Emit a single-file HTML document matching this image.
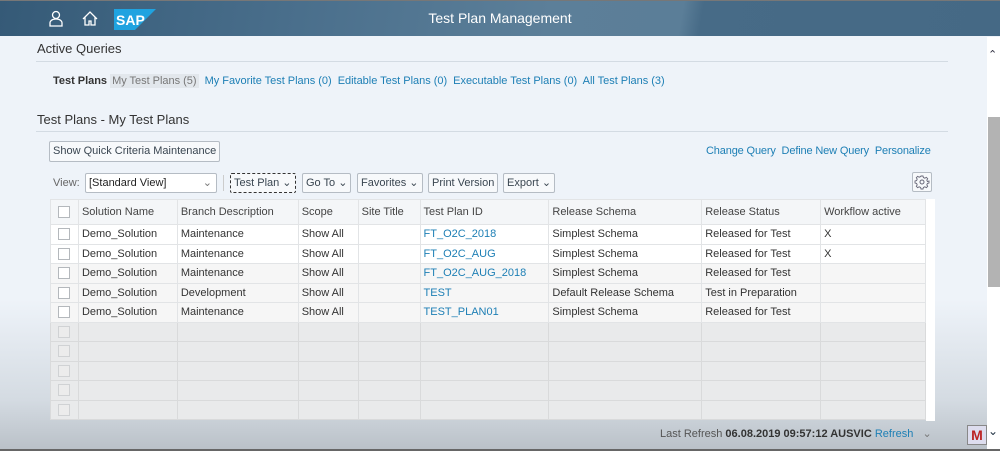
<!DOCTYPE html>
<html><head><style>
*{margin:0;padding:0;box-sizing:border-box}
body{width:1000px;height:451px;overflow:hidden;font-family:"Liberation Sans",sans-serif;font-size:11px;color:#333;background:linear-gradient(#eef3f9 0,#eef3f9 300px,#d4dbe2 400px,#b9c0c7 451px);position:relative}
.hdr{position:absolute;left:0;top:0;width:1000px;height:36px;background:linear-gradient(100deg,#355a77 0,#4a6f8c 30%,#5c7f99 55%,#5b7e98 68%,#476b87 70%,#456985 100%);border-top:1px solid #777}
.hdr .t{position:absolute;left:0;width:1000px;top:9px;text-align:center;color:#fff;font-size:14px}
.a{position:absolute;white-space:nowrap}
.lnk{color:#1d7fb5}
.line{position:absolute;left:36px;width:912px;height:1px;background:#d3dbe3}
.btn{position:absolute;border:1px solid #b5bcc4;border-radius:2px;background:#f7f9fb;color:#3a4651;height:20px;line-height:18px;padding:0 3px;font-size:11px;white-space:nowrap}
table{position:absolute;left:50px;top:199px;border-collapse:collapse;width:876px}
td{border:1px solid #e2e4e6;height:19.5px;padding:0 3px;white-space:nowrap;font-size:11px}
tr.h td{height:25px;background:#f4f6f8;color:#444}
tr.d td{background:#fff}
tr.d.g td{background:#f6f6f6}
tr.e td{background:#e9eaeb;border-color:#d9dadb}
.cb{display:inline-block;width:12px;height:12px;border:1px solid #b4b8bc;background:#fff;vertical-align:middle;margin-left:4px}
tr.e .cb{background:#ececec;border-color:#d0d2d4}
</style></head><body>
<div class="hdr">
<svg style="position:absolute;left:49px;top:9px" width="14" height="17" viewBox="0 0 14 17"><circle cx="7" cy="5" r="3.5" fill="none" stroke="#fff" stroke-width="1.3"/><path d="M1 16v-3c0-2 2-4 6-4s6 2 6 4v3z" fill="none" stroke="#fff" stroke-width="1.3"/></svg>
<svg style="position:absolute;left:82px;top:10px" width="16" height="15" viewBox="0 0 16 15"><path d="M1 8L8 1l7 7M3 6v8h4v-4h2v4h4V6" fill="none" stroke="#fff" stroke-width="1.3"/></svg>
<svg style="position:absolute;left:114px;top:8px" width="42" height="21" viewBox="0 0 42 21"><path d="M0 0h42L21 21H0z" fill="#1fa3e0"/><text x="2" y="16" font-family="Liberation Sans" font-weight="bold" font-size="14" fill="#fff">SAP</text></svg>
<div class="t">Test Plan Management</div>
</div>
<div class="a" style="left:987px;top:37px;width:13px;height:414px;background:#fff"></div>
<div class="a" style="left:988px;top:117px;width:12px;height:170px;background:#b3b3b3"></div>
<div class="a" style="left:988px;top:48px;font-size:11px;color:#334">&#8963;</div>
<div class="a" style="left:37px;top:41px;font-size:13px;color:#333">Active Queries</div>
<div class="line" style="top:61px"></div>
<div class="a" style="left:53px;top:75px;letter-spacing:-0.02px"><b style="color:#333">Test Plans</b> <span style="background:#e2e7ec;color:#777;padding:1px 2px">My Test Plans (5)</span> <span class="lnk">&nbsp;My Favorite Test Plans (0)&nbsp; Editable Test Plans (0)&nbsp; Executable Test Plans (0)&nbsp; All Test Plans (3)</span></div>
<div class="a" style="left:37px;top:112px;font-size:13px;color:#333">Test Plans - My Test Plans</div>
<div class="line" style="top:131px"></div>
<div class="btn" style="left:49px;top:141px;height:21px;line-height:19px">Show Quick Criteria Maintenance</div>
<div class="a lnk" style="left:706px;top:145px;letter-spacing:-0.15px">Change Query&nbsp; Define New Query&nbsp; Personalize</div>
<div class="a" style="left:53px;top:177px;color:#666">View:</div>
<div class="btn" style="left:85px;top:173px;width:132px;background:#fff;color:#222">[Standard View]<span style="position:absolute;right:4px;color:#777">&#8964;</span></div>
<div class="a" style="left:223px;top:175px;width:1px;height:16px;background:#ccc"></div>
<div class="btn" style="left:230px;top:173px;border:1px dashed #333">Test Plan &#8964;</div>
<div class="btn" style="left:302px;top:173px">Go To &#8964;</div>
<div class="btn" style="left:357px;top:173px">Favorites &#8964;</div>
<div class="btn" style="left:428px;top:173px">Print Version</div>
<div class="btn" style="left:503px;top:173px">Export &#8964;</div>
<div class="btn" style="left:912px;top:172px;width:20px;height:20px;padding:0"><svg width="18" height="18" viewBox="0 0 18 18"><circle cx="9" cy="9" r="2" fill="none" stroke="#667" stroke-width="1"/><path d="M8 3h2l.4 1.6 1.5.6 1.4-.9 1.4 1.4-.9 1.4.6 1.5L16 8v2l-1.6.4-.6 1.5.9 1.4-1.4 1.4-1.4-.9-1.5.6L10 16H8l-.4-1.6-1.5-.6-1.4.9-1.4-1.4.9-1.4-.6-1.5L2 10V8l1.6-.4.6-1.5-.9-1.4 1.4-1.4 1.4.9 1.5-.6z" fill="none" stroke="#667" stroke-width="0.9"/></svg></div>
<div class="a" style="left:926px;top:199px;width:9px;height:222px;background:#fff"></div>
<table>
<colgroup><col style="width:28px"><col style="width:99px"><col style="width:121px"><col style="width:60px"><col style="width:62px"><col style="width:129px"><col style="width:153px"><col style="width:119px"><col style="width:105px"></colgroup>
<tr class="h"><td><span class="cb"></span></td><td>Solution Name</td><td>Branch Description</td><td>Scope</td><td>Site Title</td><td>Test Plan ID</td><td>Release Schema</td><td>Release Status</td><td>Workflow active</td></tr>
<tr class="d"><td><span class="cb"></span></td><td>Demo_Solution</td><td>Maintenance</td><td>Show All</td><td></td><td class="lnk">FT_O2C_2018</td><td>Simplest Schema</td><td>Released for Test</td><td>X</td></tr>
<tr class="d"><td><span class="cb"></span></td><td>Demo_Solution</td><td>Maintenance</td><td>Show All</td><td></td><td class="lnk">FT_O2C_AUG</td><td>Simplest Schema</td><td>Released for Test</td><td>X</td></tr>
<tr class="d g"><td><span class="cb"></span></td><td>Demo_Solution</td><td>Maintenance</td><td>Show All</td><td></td><td class="lnk">FT_O2C_AUG_2018</td><td>Simplest Schema</td><td>Released for Test</td><td></td></tr>
<tr class="d g"><td><span class="cb"></span></td><td>Demo_Solution</td><td>Development</td><td>Show All</td><td></td><td class="lnk">TEST</td><td>Default Release Schema</td><td>Test in Preparation</td><td></td></tr>
<tr class="d g"><td><span class="cb"></span></td><td>Demo_Solution</td><td>Maintenance</td><td>Show All</td><td></td><td class="lnk">TEST_PLAN01</td><td>Simplest Schema</td><td>Released for Test</td><td></td></tr>
<tr class="e"><td><span class="cb"></span></td><td></td><td></td><td></td><td></td><td></td><td></td><td></td><td></td></tr>
<tr class="e"><td><span class="cb"></span></td><td></td><td></td><td></td><td></td><td></td><td></td><td></td><td></td></tr>
<tr class="e"><td><span class="cb"></span></td><td></td><td></td><td></td><td></td><td></td><td></td><td></td><td></td></tr>
<tr class="e"><td><span class="cb"></span></td><td></td><td></td><td></td><td></td><td></td><td></td><td></td><td></td></tr>
<tr class="e"><td><span class="cb"></span></td><td></td><td></td><td></td><td></td><td></td><td></td><td></td><td></td></tr>
</table>
<div class="a" style="left:660px;top:427px;color:#555">Last Refresh <b style="color:#333">06.08.2019 09:57:12 AUSVIC</b> <span class="lnk">Refresh</span> &nbsp;&nbsp;<span style="color:#777">&#8964;</span></div>
<div class="a" style="left:967px;top:425px;width:20px;height:20px;background:#dde;border:1px solid #888;font-weight:bold;color:#b22;font-size:14px;text-align:center;line-height:18px">M</div>
<div class="a" style="left:988px;top:424px;color:#234;font-size:12px">&#8964;</div>
<div class="a" style="left:0;top:449px;width:1000px;height:2px;background:#666"></div>
</body></html>
